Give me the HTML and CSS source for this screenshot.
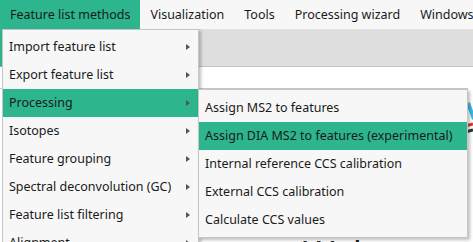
FILE: index.html
```html
<!DOCTYPE html>
<html lang="en">
<head>
    <meta charset="UTF-8">
    <title>MZmine</title>
    <link rel="stylesheet" href="styles.css">
</head>
<body>
    <div class="menubar">
        <span class="mitem active">Feature list methods</span>
        <span class="mitem">Visualization</span>
        <span class="mitem">Tools</span>
        <span class="mitem">Processing wizard</span>
        <span class="mitem">Windows</span>
    </div>
    <div class="toolbar"></div>
    <div class="tabs"></div>
    <div class="content">
        <svg class="logo" width="8" height="36" viewBox="0 0 8 36">
            <path d="M3 2 L9 18" stroke="#3bb8e6" stroke-width="4" fill="none"/>
            <path d="M0 25 L8 23" stroke="#d63a3a" stroke-width="3" fill="none"/>
            <path d="M0 31 L8 29" stroke="#333" stroke-width="3" fill="none"/>
        </svg>
        <h1 class="welcome">Welcome to MZmine</h1>
    </div>

    <!-- dropdown -->
    <ul class="menu main">
        <li>Import feature list<i class="arr"></i></li>
        <li>Export feature list<i class="arr"></i></li>
        <li class="sel">Processing<i class="arr"></i></li>
        <li>Isotopes<i class="arr"></i></li>
        <li>Feature grouping<i class="arr"></i></li>
        <li>Spectral deconvolution (GC)<i class="arr"></i></li>
        <li>Feature list filtering<i class="arr"></i></li>
        <li>Alignment<i class="arr"></i></li>
    </ul>
    <ul class="menu sub">
        <li>Assign MS2 to features</li>
        <li class="sel">Assign DIA MS2 to features (experimental)</li>
        <li>Internal reference CCS calibration</li>
        <li>External CCS calibration</li>
        <li>Calculate CCS values</li>
    </ul>
</body>
</html>
```

FILE: styles.css
```css
* {
    padding: 0;
    margin: 0;
    box-sizing: border-box;
}

body {
    width: 473px;
    height: 242px;
    overflow: hidden;
    position: relative;
    background: #fff;
    font-family: "Noto Sans", "Open Sans", sans-serif;
    font-size: 12.5px;
    color: #1a1a1a;
}

ul,
li {
    list-style: none;
}

.menubar {
    display: flex;
    height: 29px;
    background: #f7f7f7;
}

.mitem {
    padding: 0 10px;
    line-height: 29px;
    white-space: nowrap;
}

.mitem.active {
    background: #2db58d;
}

.toolbar {
    height: 38px;
    background: #dedede;
    border-left: 2px solid #2db58d;
    border-bottom: 1px solid #c4c4c4;
}

.tabs {
    height: 22px;
    width: 468px;
    border-bottom: 1px solid #c8c8c8;
}

.content {
    display: flex;
    flex-direction: column;
    align-items: flex-end;
    padding-top: 12px;
    overflow: hidden;
}

.welcome {
    align-self: flex-start;
    margin-left: 303px;
    margin-top: 93px;
    font-size: 34px;
    font-weight: normal;
    white-space: nowrap;
    color: #222;
}

.menu {
    position: absolute;
    background: #f7f7f7;
    border: 1px solid #c6c6c6;
    box-shadow: 2px 2px 3px rgba(0, 0, 0, 0.25);
}

.menu li {
    position: relative;
    height: 28px;
    line-height: 28px;
    padding-left: 6px;
    white-space: nowrap;
}

.menu li.sel {
    background: #2db58d;
}

.main {
    left: 2px;
    top: 29px;
    width: 197px;
    padding-top: 3px;
}

.sub {
    left: 198px;
    top: 89px;
    width: 270px;
    padding: 4px 0 3px;
}

.arr {
    position: absolute;
    right: 8px;
    top: 11px;
    border-left: 4px solid #555;
    border-top: 3px solid transparent;
    border-bottom: 3px solid transparent;
}
```
